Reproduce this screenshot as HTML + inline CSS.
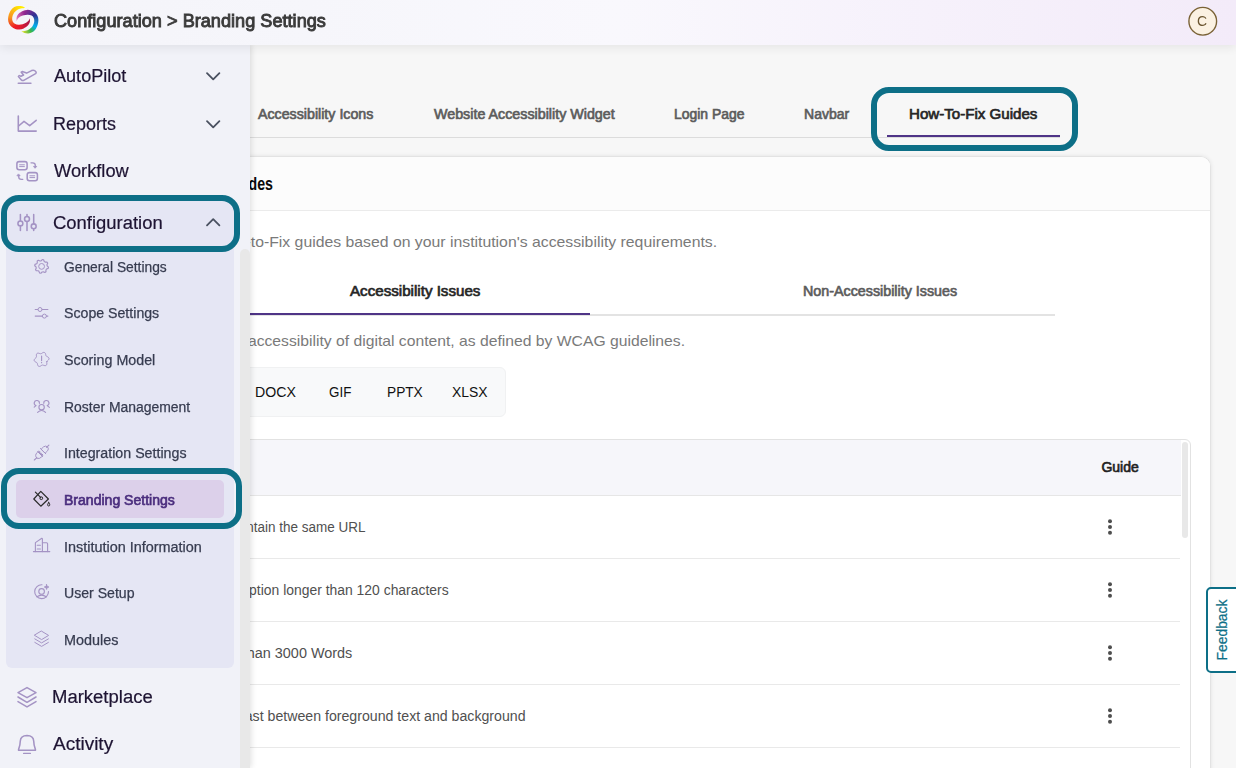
<!DOCTYPE html>
<html lang="en">
<head>
<meta charset="utf-8">
<meta name="viewport" content="width=1236">
<title>Configuration &gt; Branding Settings</title>
<style>
*{box-sizing:border-box;margin:0;padding:0}
html,body{width:1236px;height:768px;overflow:hidden}
body{position:relative;background:#f7f7f7;color:#333;font-family:"Liberation Sans",sans-serif}
ul{list-style:none}
a{color:inherit;text-decoration:none}
h1,h2,p{font-weight:400}
/* every text node is absolutely placed on the measured baseline */
.t{position:absolute;white-space:nowrap;line-height:1;display:block;font-weight:400}
.ic{position:absolute;overflow:visible}
.abs{position:absolute}
/* top bar */
.topbar{position:absolute;left:0;top:0;width:1236px;height:44.5px;z-index:30;will-change:transform;background:linear-gradient(90deg,#f4f4f9 0%,#f6f6fb 25%,#f9f8fd 50%,#f6f1fb 75%,#f3ebf9 100%);box-shadow:0 3px 9px rgba(0,0,0,.07)}
/* expanded sidebar overlaying the page */
.sidebar{position:absolute;left:0;top:44px;width:250px;height:724px;z-index:20;will-change:transform;background:#f1f2f8;box-shadow:1px 0 6px rgba(0,0,0,.13)}
.sidebar .group{position:absolute;left:6.2px;top:152px;width:227.8px;height:471.5px;background:#e5e6f4;border-radius:6px}
.sidebar .active{position:absolute;left:15.7px;top:435.7px;width:208.7px;height:38.5px;background:#dcd0ea;border-radius:5px}
.sidebar .thumb{position:absolute;left:240.3px;top:205px;width:9.7px;height:540px;background:#e8e8e8;border-radius:5px}
.menu{position:absolute;left:0;top:0;width:250px;height:768px;z-index:25;will-change:transform}
/* page */
main{position:absolute;left:0;top:0;width:1236px;height:768px;z-index:1}
.tabs .rule{position:absolute;left:100px;top:137px;width:960px;height:1px;background:#dcdcdc}
.tabs .ink{position:absolute;left:887px;top:135.2px;width:173px;height:2px;background:#4f3487}
.card{position:absolute;left:80px;top:157px;width:1130.3px;height:640px;background:#fff;border-radius:9px;box-shadow:0 0 0 .5px rgba(0,0,0,.05),0 0 5px rgba(0,0,0,.13)}
.card-head{position:absolute;left:80px;top:157px;width:1130.3px;height:54px;background:#fcfcfc;border-bottom:1px solid #ebebeb;border-radius:9px 9px 0 0}
.subtabs .rule{position:absolute;left:120px;top:314px;width:935px;height:1.5px;background:#e3e3e3}
.subtabs .ink{position:absolute;left:239px;top:312.5px;width:350.5px;height:2.5px;background:#4f3487}
.filetypes{position:absolute;left:100px;top:367px;width:405.5px;height:50px;background:#f8f9fa;border:1px solid #f0f1f2;border-radius:6px}
.grid{position:absolute;left:100px;top:439px;width:1091px;height:340px;background:#fff;border:1px solid #e2e2e2;border-radius:6px;overflow:hidden}
.grid .thead{position:absolute;left:0;top:0;width:1080px;height:56px;background:#f6f6fa;border-bottom:1px solid #e6e6e6}
.grid .line{position:absolute;left:0;width:1079.3px;height:1.2px;background:#e9e9e9}
.grid .thumb{position:absolute;left:1081.2px;top:1.5px;width:5.8px;height:96px;background:#e8e8e8;border-radius:3px}
.feedback{z-index:5;position:absolute;left:1206px;top:587px;width:34px;height:86px;background:#fff;border:2px solid #0d6f87;border-radius:5px}
.feedback-label{z-index:6;position:absolute;left:1221.6px;top:630.4px;width:0;height:0}
.feedback-label .t{left:-35px;top:-7.2px;width:70px;text-align:center;font-size:14px;color:#0d6f87;-webkit-text-stroke:.2px #0d6f87;transform:rotate(-90deg) scaleX(.99);transform-origin:50% 50%}
/* walkthrough highlight rings */
.hl{position:absolute;border:6px solid #0d6f87;border-radius:18px;z-index:40;pointer-events:none}
</style>
</head>
<body>

<main>
<nav class="tabs" role="tablist" aria-label="Branding sections">
<div class="rule"></div><div class="ink"></div>
<a role="tab" aria-selected="false"><span class="t" style="top:107px;font-size:14px;color:#5c5c5c;left:258.17px;transform-origin:0 50%;-webkit-text-stroke:0.65px #5c5c5c;transform:scaleX(1.0156);">Accessibility Icons</span></a>
<a role="tab" aria-selected="false"><span class="t" style="top:107px;font-size:14px;color:#5c5c5c;left:434.09px;transform-origin:0 50%;-webkit-text-stroke:0.65px #5c5c5c;transform:scaleX(1.0202);">Website Accessibility Widget</span></a>
<a role="tab" aria-selected="false"><span class="t" style="top:107px;font-size:14px;color:#5c5c5c;left:674.42px;transform-origin:0 50%;-webkit-text-stroke:0.65px #5c5c5c;transform:scaleX(0.9938);">Login Page</span></a>
<a role="tab" aria-selected="false"><span class="t" style="top:107px;font-size:14px;color:#5c5c5c;left:803.92px;transform-origin:0 50%;-webkit-text-stroke:0.65px #5c5c5c;transform:scaleX(1.0020);">Navbar</span></a>
<a role="tab" aria-selected="true"><span class="t" style="top:107px;font-size:14px;color:#262626;left:908.74px;transform-origin:0 50%;-webkit-text-stroke:0.65px #262626;transform:scaleX(1.0784);">How-To-Fix Guides</span></a>
</nav>
<section aria-label="How-To-Fix Guides">
<div class="card"></div><div class="card-head"></div>
<h2 class="t" style="top:176px;font-size:17.6px;color:#0a0a0a;font-weight:700;right:963.21px;transform-origin:100% 50%;transform:scaleX(0.8070);">How-To-Fix Guides</h2>
<p class="t" style="top:234px;font-size:15px;color:#7a7a7a;right:519.20px;transform-origin:100% 50%;transform:scaleX(1.0525);">Customize How-to-Fix guides based on your institution's accessibility requirements.</p>
<div class="subtabs" role="tablist">
<div class="rule"></div><div class="ink"></div>
<a role="tab" aria-selected="true"><span class="t" style="top:284px;font-size:14px;color:#262626;left:349.92px;transform-origin:0 50%;-webkit-text-stroke:0.65px #262626;transform:scaleX(1.0815);">Accessibility Issues</span></a>
<a role="tab" aria-selected="false"><span class="t" style="top:284px;font-size:14px;color:#5c5c5c;left:803.13px;transform-origin:0 50%;-webkit-text-stroke:0.65px #5c5c5c;transform:scaleX(1.0207);">Non-Accessibility Issues</span></a>
</div>
<p class="t" style="top:333px;font-size:15px;color:#7a7a7a;right:551.15px;transform-origin:100% 50%;transform:scaleX(1.0464);">Issues that affect the accessibility of digital content, as defined by WCAG guidelines.</p>
<div class="filetypes"></div>
<ul aria-label="File type">
<li><span class="t" style="top:385px;font-size:14px;color:#111111;right:1076.00px;transform-origin:100% 50%;transform:scaleX(0.9630);">ALL</span></li>
<li><span class="t" style="top:385px;font-size:14px;color:#111111;right:1021.00px;transform-origin:100% 50%;transform:scaleX(0.8929);">PDF</span></li>
<li><span class="t" style="top:385px;font-size:14px;color:#111111;left:255.39px;transform-origin:0 50%;transform:scaleX(1.0100);">DOCX</span></li>
<li><span class="t" style="top:385px;font-size:14px;color:#111111;left:329.30px;transform-origin:0 50%;transform:scaleX(0.9565);">GIF</span></li>
<li><span class="t" style="top:385px;font-size:14px;color:#111111;left:386.56px;transform-origin:0 50%;transform:scaleX(0.9773);">PPTX</span></li>
<li><span class="t" style="top:385px;font-size:14px;color:#111111;left:452.39px;transform-origin:0 50%;transform:scaleX(0.9911);">XLSX</span></li>
</ul>
<div class="grid" aria-hidden="true">
<div class="thead"></div>
<div class="line" style="top:118px"></div>
<div class="line" style="top:181px"></div>
<div class="line" style="top:244px"></div>
<div class="line" style="top:307px"></div>
<div class="thumb"></div>
</div>
<div role="table">
<div role="row"><div role="columnheader"><span class="t" style="top:460px;font-size:14px;color:#222222;font-weight:700;left:120.00px;transform-origin:0 50%;">Issue</span></div><div role="columnheader"><span class="t" style="top:460px;font-size:14px;color:#222222;left:1101.42px;transform-origin:0 50%;-webkit-text-stroke:0.65px #222222;">Guide</span></div></div>
<div role="row"><div role="cell"><span class="t" style="top:520px;font-size:14px;color:#505050;right:870.77px;transform-origin:100% 50%;transform:scaleX(0.9639);">Multiple links contain the same URL</span></div><div role="cell"><svg class="ic" aria-hidden="true" style="left:1105.9px;top:517.1px" width="8" height="20" viewBox="0 0 8 20"><circle cx="4" cy="4.3" r="2" fill="#4e4e4e"/><circle cx="4" cy="10" r="2" fill="#4e4e4e"/><circle cx="4" cy="15.7" r="2" fill="#4e4e4e"/></svg></div></div>
<div role="row"><div role="cell"><span class="t" style="top:583px;font-size:14px;color:#505050;right:787.75px;transform-origin:100% 50%;transform:scaleX(0.9936);">Image alt description longer than 120 characters</span></div><div role="cell"><svg class="ic" aria-hidden="true" style="left:1105.9px;top:580.2px" width="8" height="20" viewBox="0 0 8 20"><circle cx="4" cy="4.3" r="2" fill="#4e4e4e"/><circle cx="4" cy="10" r="2" fill="#4e4e4e"/><circle cx="4" cy="15.7" r="2" fill="#4e4e4e"/></svg></div></div>
<div role="row"><div role="cell"><span class="t" style="top:646px;font-size:14px;color:#505050;right:884.08px;transform-origin:100% 50%;transform:scaleX(1.0301);">Document has more than 3000 Words</span></div><div role="cell"><svg class="ic" aria-hidden="true" style="left:1105.9px;top:643.2px" width="8" height="20" viewBox="0 0 8 20"><circle cx="4" cy="4.3" r="2" fill="#4e4e4e"/><circle cx="4" cy="10" r="2" fill="#4e4e4e"/><circle cx="4" cy="15.7" r="2" fill="#4e4e4e"/></svg></div></div>
<div role="row"><div role="cell"><span class="t" style="top:709px;font-size:14px;color:#505050;right:710.90px;transform-origin:100% 50%;transform:scaleX(1.0106);">Insufficient contrast between foreground text and background</span></div><div role="cell"><svg class="ic" aria-hidden="true" style="left:1105.9px;top:706.2px" width="8" height="20" viewBox="0 0 8 20"><circle cx="4" cy="4.3" r="2" fill="#4e4e4e"/><circle cx="4" cy="10" r="2" fill="#4e4e4e"/><circle cx="4" cy="15.7" r="2" fill="#4e4e4e"/></svg></div></div>
</div>
</section>
</main>
<div class="feedback"></div>
<div class="feedback-label"><span class="t">Feedback</span></div>
<aside class="sidebar"><div class="group"></div><div class="active"></div><div class="thumb"></div></aside>
<nav class="menu" aria-label="Main navigation">
<ul>
<li><a><svg class="ic" aria-hidden="true" style="left:14px;top:66px" width="26" height="22" viewBox="14 66 26 22"><path d="M18.3 83.3 H30.9" fill="none" stroke="#a493c4" stroke-width="1.55" stroke-linecap="round" stroke-linejoin="round" /><path d="M18.4 76.6 L21.6 80.2 Q22.6 80.9 23.8 80.3 L35.6 73.6 Q36.6 72.9 36 71.9 Q34.4 69.6 31.6 70.6 L26.6 73.1 L22.2 71.6 L21.2 72.2 L23.6 75 L21 76.3 L19.3 75.6 Z" fill="none" stroke="#a493c4" stroke-width="1.55" stroke-linecap="round" stroke-linejoin="round" /></svg><span class="t" style="top:68px;font-size:17.6px;color:#1e1433;left:53.93px;transform-origin:0 50%;-webkit-text-stroke:0.2px #1e1433;transform:scaleX(1.0277);">AutoPilot</span><svg class="ic" style="left:205.8px;top:72.2px" width="14.4" height="8.6" viewBox="0 0 14.4 8.6" ><path d="M1 1.2 L7.2 7.4 L13.4 1.2" fill="none" stroke="#4a5160" stroke-width="1.8" stroke-linecap="round" stroke-linejoin="round"/></svg></a></li>
<li><a><svg class="ic" aria-hidden="true" style="left:14px;top:112px" width="26" height="24" viewBox="14 112 26 24"><path d="M18.3 116 V131.1 H36.2" fill="none" stroke="#a493c4" stroke-width="1.6" stroke-linecap="round" stroke-linejoin="round" /><path d="M18.6 126 L24 121.4 L29.7 125.7 L36.2 120.3" fill="none" stroke="#a493c4" stroke-width="1.55" stroke-linecap="round" stroke-linejoin="round" /></svg><span class="t" style="top:116px;font-size:17.6px;color:#1e1433;left:52.59px;transform-origin:0 50%;-webkit-text-stroke:0.2px #1e1433;transform:scaleX(1.0208);">Reports</span><svg class="ic" style="left:205.8px;top:119.8px" width="14.4" height="8.6" viewBox="0 0 14.4 8.6" ><path d="M1 1.2 L7.2 7.4 L13.4 1.2" fill="none" stroke="#4a5160" stroke-width="1.8" stroke-linecap="round" stroke-linejoin="round"/></svg></a></li>
<li><a><svg class="ic" aria-hidden="true" style="left:14px;top:158px" width="27" height="26" viewBox="14 158 27 26"><rect x="16.9" y="161.6" width="10.2" height="8.2" rx="2.2" fill="none" stroke="#a493c4" stroke-width="1.55"/><rect x="27.2" y="172.6" width="10.2" height="8.2" rx="2.2" fill="none" stroke="#a493c4" stroke-width="1.55"/><path d="M19.6 164.8 H24.4 M19.6 166.6 H24.4" fill="none" stroke="#a493c4" stroke-width="1.0" stroke-linecap="round" stroke-linejoin="round" /><path d="M29.9 175.8 H34.7 M29.9 177.6 H34.7" fill="none" stroke="#a493c4" stroke-width="1.0" stroke-linecap="round" stroke-linejoin="round" /><path d="M31 162.8 H32.6 Q35.3 162.8 35.3 165.4 V166.6" fill="none" stroke="#a493c4" stroke-width="1.3" stroke-linecap="round" stroke-linejoin="round" /><path d="M33.9 166.4 H36.7 L35.3 168 Z" fill="#a493c4" stroke="#a493c4" stroke-width="0.9" stroke-linecap="round" stroke-linejoin="round" /><path d="M22.8 179.3 H21.4 Q18.7 179.3 18.7 176.7 V175.6" fill="none" stroke="#a493c4" stroke-width="1.3" stroke-linecap="round" stroke-linejoin="round" /><path d="M17.3 175.8 H20.1 L18.7 174.2 Z" fill="#a493c4" stroke="#a493c4" stroke-width="0.9" stroke-linecap="round" stroke-linejoin="round" /></svg><span class="t" style="top:163px;font-size:17.6px;color:#1e1433;left:53.86px;transform-origin:0 50%;-webkit-text-stroke:0.2px #1e1433;transform:scaleX(1.0380);">Workflow</span></a></li>
<li><a><svg class="ic" aria-hidden="true" style="left:14px;top:210px" width="26" height="25" viewBox="14 210 26 25"><path d="M20.4 214.6 V220.8 M20.4 226 V230.4 M27 214.6 V216.4 M27 221.6 V230.4 M33.7 214.6 V223.7 M33.7 228.9 V230.4" fill="none" stroke="#a493c4" stroke-width="1.55" stroke-linecap="round" stroke-linejoin="round" /><circle cx="20.4" cy="223.4" r="2.45" fill="none" stroke="#a493c4" stroke-width="1.55"/><circle cx="27" cy="219" r="2.45" fill="none" stroke="#a493c4" stroke-width="1.55"/><circle cx="33.7" cy="226.3" r="2.45" fill="none" stroke="#a493c4" stroke-width="1.55"/></svg><span class="t" style="top:215px;font-size:17.6px;color:#1e1433;left:52.80px;transform-origin:0 50%;-webkit-text-stroke:0.2px #1e1433;transform:scaleX(1.0476);">Configuration</span><svg class="ic" style="left:205.8px;top:217.8px" width="14.4" height="8.6" viewBox="0 0 14.4 8.6" ><path d="M1 7.4 L7.2 1.2 L13.4 7.4" fill="none" stroke="#4a5160" stroke-width="1.8" stroke-linecap="round" stroke-linejoin="round"/></svg></a>
<ul>
<li><a><svg class="ic" aria-hidden="true" style="left:31px;top:256px" width="22" height="21" viewBox="31 256 22 21"><path d="M48.47 267.08 L48.20 268.40 L46.54 269.04 L45.93 269.95 L45.98 271.73 L44.85 272.49 L43.23 271.76 L42.15 271.97 L40.92 273.27 L39.60 273.00 L38.96 271.34 L38.05 270.73 L36.27 270.78 L35.51 269.65 L36.24 268.03 L36.03 266.95 L34.73 265.72 L35.00 264.40 L36.66 263.76 L37.27 262.85 L37.22 261.07 L38.35 260.31 L39.97 261.04 L41.05 260.83 L42.28 259.53 L43.60 259.80 L44.24 261.46 L45.15 262.07 L46.93 262.02 L47.69 263.15 L46.96 264.77 L47.17 265.85 Z" fill="none" stroke="#a493c4" stroke-width="1.15" stroke-linecap="round" stroke-linejoin="round" /><circle cx="41.6" cy="266.4" r="2.9" fill="none" stroke="#a493c4" stroke-width="1.0"/></svg><span class="t" style="top:260px;font-size:14px;color:#373c50;left:64.28px;transform-origin:0 50%;-webkit-text-stroke:0.25px #373c50;transform:scaleX(0.9852);">General Settings</span></a></li>
<li><a><svg class="ic" aria-hidden="true" style="left:31px;top:303px" width="22" height="20" viewBox="31 303 22 20"><path d="M35.2 309.5 H37.9 M42.1 309.5 H47.9" fill="none" stroke="#a493c4" stroke-width="1.1" stroke-linecap="round" stroke-linejoin="round" /><circle cx="40" cy="309.5" r="2.0" fill="none" stroke="#a493c4" stroke-width="1.0"/><path d="M35.2 316.1 H42.3 M46.5 316.1 H47.9" fill="none" stroke="#a493c4" stroke-width="1.1" stroke-linecap="round" stroke-linejoin="round" /><circle cx="44.4" cy="316.1" r="2.0" fill="none" stroke="#a493c4" stroke-width="1.0"/></svg><span class="t" style="top:306px;font-size:14px;color:#373c50;left:63.87px;transform-origin:0 50%;-webkit-text-stroke:0.25px #373c50;transform:scaleX(1.0109);">Scope Settings</span></a></li>
<li><a><svg class="ic" aria-hidden="true" style="left:31px;top:349px" width="22" height="21" viewBox="31 349 22 21"><path d="M46.87 361.58 L46.76 362.16 L46.80 362.88 L46.84 363.70 L46.72 364.52 L46.35 365.18 L45.73 365.58 L44.95 365.66 L44.13 365.50 L43.37 365.24 L42.73 365.06 L42.16 365.09 L41.60 365.36 L40.97 365.79 L40.25 366.21 L39.47 366.43 L38.73 366.33 L38.14 365.88 L37.74 365.17 L37.52 364.37 L37.38 363.62 L37.18 363.03 L36.80 362.60 L36.22 362.28 L35.50 361.93 L34.81 361.46 L34.31 360.85 L34.15 360.13 L34.36 359.40 L34.86 358.74 L35.46 358.18 L36.00 357.70 L36.33 357.22 L36.44 356.64 L36.40 355.92 L36.36 355.10 L36.48 354.28 L36.85 353.62 L37.47 353.22 L38.25 353.14 L39.07 353.30 L39.83 353.56 L40.47 353.74 L41.04 353.71 L41.60 353.44 L42.23 353.01 L42.95 352.59 L43.73 352.37 L44.47 352.47 L45.06 352.92 L45.46 353.63 L45.68 354.43 L45.82 355.18 L46.02 355.77 L46.40 356.20 L46.98 356.52 L47.70 356.87 L48.39 357.34 L48.89 357.95 L49.05 358.67 L48.84 359.40 L48.34 360.06 L47.74 360.62 L47.20 361.10 L46.87 361.58 Z" fill="none" stroke="#a493c4" stroke-width="1.0" stroke-linecap="round" stroke-linejoin="round" /><path d="M41.6 356 V360.4 M41.6 362.2 V362.8" fill="none" stroke="#a493c4" stroke-width="1.1" stroke-linecap="round" stroke-linejoin="round" /></svg><span class="t" style="top:353px;font-size:14px;color:#373c50;left:64.05px;transform-origin:0 50%;-webkit-text-stroke:0.25px #373c50;transform:scaleX(1.0201);">Scoring Model</span></a></li>
<li><a><svg class="ic" aria-hidden="true" style="left:31px;top:396px" width="22" height="21" viewBox="31 396 22 21"><circle cx="41.6" cy="407.2" r="2.7" fill="none" stroke="#a493c4" stroke-width="1.1"/><path d="M37.6 412.4 Q41.6 408.6 45.6 412.4" fill="none" stroke="#a493c4" stroke-width="1.1" stroke-linecap="round" stroke-linejoin="round" /><path d="M39.4 403.4 A2.6 2.6 0 1 0 36 405.6 M36 405.6 L34.2 407.2" fill="none" stroke="#a493c4" stroke-width="1.1" stroke-linecap="round" stroke-linejoin="round" /><path d="M43.8 403.4 A2.6 2.6 0 1 1 47.2 405.6 M47.2 405.6 L49.4 407.4" fill="none" stroke="#a493c4" stroke-width="1.1" stroke-linecap="round" stroke-linejoin="round" /></svg><span class="t" style="top:400px;font-size:14px;color:#373c50;left:63.81px;transform-origin:0 50%;-webkit-text-stroke:0.25px #373c50;transform:scaleX(0.9949);">Roster Management</span></a></li>
<li><a><svg class="ic" aria-hidden="true" style="left:31px;top:442px" width="22" height="21" viewBox="31 442 22 21"><path d="M34.3 460 L36.6 457.8 M46.6 447.4 L48.9 445.2" fill="none" stroke="#a493c4" stroke-width="1.1" stroke-linecap="round" stroke-linejoin="round" /><path d="M37.6 451.6 L42.6 456.6 M36.9 458.2 Q34 455.3 37.4 452.4 L38.4 451.4 L42.8 455.8 L41.8 456.8 Q39.2 459.6 36.9 458.2 Z" fill="none" stroke="#a493c4" stroke-width="1.0" stroke-linecap="round" stroke-linejoin="round" /><path d="M40.4 448.4 L45.8 453.8 M41.4 449 L43.6 446.8 Q45.8 445.2 47.6 447 Q49.2 448.8 47.6 450.8 L45.4 453 Z" fill="none" stroke="#a493c4" stroke-width="1.0" stroke-linecap="round" stroke-linejoin="round" /><path d="M39.2 451 L40.4 452.2 M41.6 453.6 L42.8 454.8" fill="none" stroke="#a493c4" stroke-width="1.0" stroke-linecap="round" stroke-linejoin="round" /></svg><span class="t" style="top:446px;font-size:14px;color:#373c50;left:63.86px;transform-origin:0 50%;-webkit-text-stroke:0.25px #373c50;transform:scaleX(1.0155);">Integration Settings</span></a></li>
<li><a aria-current="page"><svg class="ic" aria-hidden="true" style="left:30px;top:488px" width="24" height="22" viewBox="30 488 24 22"><path d="M40.8 491.4 L48.4 499 L40.8 506.2 L33.8 499 Z" fill="none" stroke="#2b2b2b" stroke-width="1.2" stroke-linecap="round" stroke-linejoin="round" /><path d="M35.4 492.2 L40.8 497.6" fill="none" stroke="#2b2b2b" stroke-width="1.2" stroke-linecap="round" stroke-linejoin="round" /><circle cx="41.3" cy="498.2" r="1.4" fill="none" stroke="#2b2b2b" stroke-width="1.0"/><path d="M48.7 502.4 Q50.4 504.6 49.6 505.6 Q48.7 506.4 47.8 505.6 Q47 504.6 48.7 502.4 Z" fill="none" stroke="#2b2b2b" stroke-width="1.0" stroke-linecap="round" stroke-linejoin="round" /></svg><span class="t" style="top:493px;font-size:14px;color:#4a2d7d;left:63.58px;transform-origin:0 50%;-webkit-text-stroke:0.65px #4a2d7d;transform:scaleX(1.0025);">Branding Settings</span></a></li>
<li><a><svg class="ic" aria-hidden="true" style="left:31px;top:535px" width="22" height="20" viewBox="31 535 22 20"><path d="M33.4 551.6 H49.8" fill="none" stroke="#a493c4" stroke-width="1.1" stroke-linecap="round" stroke-linejoin="round" /><path d="M35.4 551.6 V542.6 L41.8 538.3 Q42.4 538.3 42.4 539 V551.6" fill="none" stroke="#a493c4" stroke-width="1.1" stroke-linecap="round" stroke-linejoin="round" /><path d="M42.4 542.8 H46.6 Q47.6 542.8 47.6 543.8 V551.6" fill="none" stroke="#a493c4" stroke-width="1.1" stroke-linecap="round" stroke-linejoin="round" /><path d="M37.2 545.2 H40.4 M37.2 549 H40.4" fill="none" stroke="#a493c4" stroke-width="1.1" stroke-linecap="round" stroke-linejoin="round" /></svg><span class="t" style="top:540px;font-size:14px;color:#373c50;left:63.77px;transform-origin:0 50%;-webkit-text-stroke:0.25px #373c50;transform:scaleX(1.0299);">Institution Information</span></a></li>
<li><a><svg class="ic" aria-hidden="true" style="left:31px;top:581px" width="22" height="21" viewBox="31 581 22 21"><path d="M42 584.8 A6.9 6.9 0 1 0 48.5 591.6" fill="none" stroke="#a493c4" stroke-width="1.1" stroke-linecap="round" stroke-linejoin="round" /><circle cx="41.6" cy="591.4" r="2.8" fill="none" stroke="#a493c4" stroke-width="1.1"/><path d="M37 596.8 Q41.6 593.4 46.2 596.8" fill="none" stroke="#a493c4" stroke-width="1.1" stroke-linecap="round" stroke-linejoin="round" /><path d="M46.6 584.6 L47.2 586.4 L48.9 587 L47.2 587.6 L46.6 589.4 L46 587.6 L44.3 587 L46 586.4 Z" fill="#a493c4" stroke="#a493c4" stroke-width="0.9" stroke-linecap="round" stroke-linejoin="round" /></svg><span class="t" style="top:586px;font-size:14px;color:#373c50;left:63.71px;transform-origin:0 50%;-webkit-text-stroke:0.25px #373c50;transform:scaleX(1.0069);">User Setup</span></a></li>
<li><a><svg class="ic" aria-hidden="true" style="left:31px;top:628px" width="22" height="22" viewBox="31 628 22 22"><path d="M41.6 631.2 L48.6 635.4 L41.6 639.6 L34.6 635.4 Z" fill="none" stroke="#a493c4" stroke-width="1.0" stroke-linecap="round" stroke-linejoin="round" /><path d="M34.8 638.9 L41.6 642.9 L48.4 638.9" fill="none" stroke="#a493c4" stroke-width="1.0" stroke-linecap="round" stroke-linejoin="round" /><path d="M34.8 642.4 L41.6 646.4 L48.4 642.4" fill="none" stroke="#a493c4" stroke-width="1.0" stroke-linecap="round" stroke-linejoin="round" /></svg><span class="t" style="top:633px;font-size:14px;color:#373c50;left:63.91px;transform-origin:0 50%;-webkit-text-stroke:0.25px #373c50;transform:scaleX(1.0292);">Modules</span></a></li>
</ul>
</li>
<li><a><svg class="ic" aria-hidden="true" style="left:14px;top:683px" width="26" height="28" viewBox="14 683 26 28"><path d="M27 687.6 L36 692.6 L27 697.6 L18 692.6 Z" fill="none" stroke="#a493c4" stroke-width="1.55" stroke-linecap="round" stroke-linejoin="round" /><path d="M18 697 L27 702.3 L36 697" fill="none" stroke="#a493c4" stroke-width="1.55" stroke-linecap="round" stroke-linejoin="round" /><path d="M18 701.6 L27 706.9 L36 701.6" fill="none" stroke="#a493c4" stroke-width="1.55" stroke-linecap="round" stroke-linejoin="round" /></svg><span class="t" style="top:689px;font-size:17.6px;color:#1e1433;left:52.22px;transform-origin:0 50%;-webkit-text-stroke:0.2px #1e1433;transform:scaleX(1.0509);">Marketplace</span></a></li>
<li><a><svg class="ic" aria-hidden="true" style="left:14px;top:731px" width="26" height="26" viewBox="14 731 26 26"><path d="M19 750.3 Q18.3 750.3 18.6 749.4 Q20.2 745.5 20.3 741 Q20.6 735.8 27 735.6 Q33.4 735.8 33.7 741 Q33.8 745.5 35.4 749.4 Q35.7 750.3 35 750.3 Z" fill="none" stroke="#a493c4" stroke-width="1.55" stroke-linecap="round" stroke-linejoin="round" /><path d="M23.6 753.4 H30.4" fill="none" stroke="#a493c4" stroke-width="1.3" stroke-linecap="round" stroke-linejoin="round" /></svg><span class="t" style="top:736px;font-size:17.6px;color:#1e1433;left:53.49px;transform-origin:0 50%;-webkit-text-stroke:0.2px #1e1433;transform:scaleX(1.0793);">Activity</span></a></li>
</ul>
</nav>
<header class="topbar">
<div class="abs" aria-label="logo" style="left:4px;top:2px;width:40px;height:36px;filter:drop-shadow(0 0 .6px rgba(255,255,255,.95))"><div class="abs" style="left:0;top:0;width:40px;height:36px;background:conic-gradient(from 90deg at 19.23px 17.68px,#a3184c 0deg,#a8184a 8deg,#c4163c 72deg,#e01b2e 112deg,#ed1c24 140deg,#f15a24 168deg,#f7931e 190deg,#fbb216 216deg,#ffe600 250deg,#fff000 285deg,#a3184c 360deg);clip-path:path('M21.20 6.00 C20.67 5.72 19.24 4.66 18.05 4.31 C16.87 3.97 15.36 3.81 14.07 3.94 C12.78 4.06 11.49 4.41 10.32 5.06 C9.14 5.72 7.96 6.63 7.03 7.88 C6.11 9.13 5.28 10.99 4.78 12.57 C4.28 14.15 4.00 15.85 4.03 17.35 C4.06 18.85 4.39 20.32 4.97 21.57 C5.55 22.82 6.46 23.95 7.50 24.85 C8.55 25.75 9.93 26.53 11.25 26.96 C12.58 27.40 14.07 27.57 15.47 27.48 C16.88 27.39 18.34 27.06 19.70 26.45 C21.05 25.84 22.56 24.90 23.59 23.82 C24.61 22.74 25.47 21.25 25.84 19.98 C26.21 18.70 25.80 16.81 25.79 16.18 C25.56 16.61 25.06 17.98 24.43 18.76 C23.81 19.53 23.01 20.24 22.04 20.82 C21.07 21.40 19.87 21.91 18.62 22.23 C17.37 22.54 15.83 22.77 14.54 22.70 C13.25 22.62 11.86 22.34 10.88 21.76 C9.89 21.18 9.07 20.27 8.63 19.23 C8.19 18.18 8.05 16.79 8.25 15.47 C8.46 14.16 9.03 12.58 9.85 11.35 C10.66 10.11 11.94 8.86 13.13 8.07 C14.32 7.27 15.63 6.91 16.98 6.57 C18.32 6.22 20.49 6.10 21.20 6.00 Z')"></div><div class="abs" style="left:0;top:0;width:40px;height:36px;background:conic-gradient(from 270deg at 19.23px 17.68px,#e488bd 0deg,#e07ab5 6deg,#c455a6 50deg,#93278f 100deg,#6a2c91 132deg,#2e3192 160deg,#1c75bc 185deg,#00aeef 210deg,#39b54a 236deg,#8dc63f 254deg,#d7df23 272deg,#e488bd 360deg);clip-path:path('M17.26 29.36 C17.78 29.64 19.21 30.70 20.40 31.04 C21.59 31.39 23.09 31.54 24.38 31.42 C25.67 31.29 26.96 30.95 28.14 30.29 C29.31 29.64 30.50 28.73 31.42 27.48 C32.34 26.23 33.17 24.37 33.67 22.79 C34.17 21.21 34.45 19.51 34.42 18.01 C34.39 16.51 34.06 15.04 33.48 13.79 C32.90 12.54 32.00 11.40 30.95 10.50 C29.90 9.61 28.53 8.83 27.20 8.39 C25.87 7.96 24.38 7.79 22.98 7.88 C21.57 7.96 20.11 8.30 18.76 8.91 C17.41 9.52 15.89 10.46 14.87 11.54 C13.84 12.61 12.98 14.11 12.61 15.38 C12.25 16.65 12.65 18.55 12.66 19.18 C12.89 18.75 13.40 17.37 14.02 16.60 C14.65 15.83 15.44 15.12 16.41 14.54 C17.38 13.96 18.59 13.44 19.84 13.13 C21.09 12.82 22.63 12.58 23.92 12.66 C25.21 12.74 26.59 13.02 27.57 13.60 C28.56 14.18 29.39 15.08 29.82 16.13 C30.26 17.18 30.40 18.57 30.20 19.88 C30.00 21.20 29.42 22.77 28.60 24.01 C27.79 25.24 26.51 26.49 25.32 27.29 C24.13 28.09 22.82 28.45 21.48 28.79 C20.13 29.14 17.96 29.26 17.26 29.36 Z')"></div></div>
<h1 class="t" style="top:12px;font-size:18px;color:#3a3a3a;left:54.23px;transform-origin:0 50%;-webkit-text-stroke:0.9px #3a3a3a;transform:scaleX(1.0082);">Configuration &gt; Branding Settings</h1>
<svg class="ic" aria-hidden="true" style="left:1186px;top:4px" width="34" height="34" viewBox="0 0 34 34"><circle cx="16.75" cy="17.25" r="13.85" fill="#fbf1e2" stroke="#7a6236" stroke-width="1.4"/></svg>
<span class="t" style="top:14px;font-size:14px;color:#6b5530;left:1197.30px;transform-origin:0 50%;transform:scaleX(0.9975);">C</span>
</header>
<div class="hl" style="left:1px;top:195px;width:239px;height:56.5px"></div>
<div class="hl" style="left:1px;top:468.3px;width:241px;height:60.8px"></div>
<div class="hl" style="left:871px;top:87px;width:207px;height:64px"></div>
</body>
</html>
